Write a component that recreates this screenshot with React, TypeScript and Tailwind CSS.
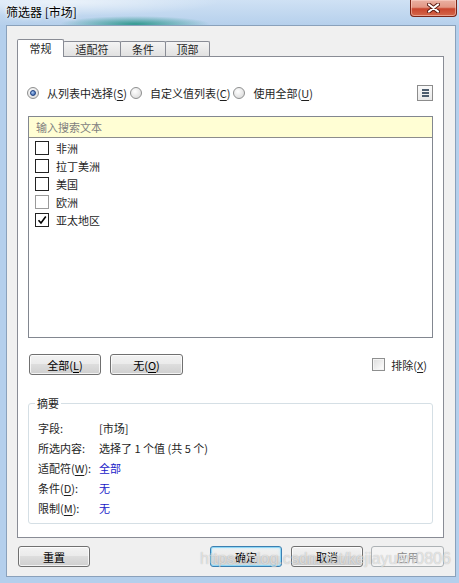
import React from "react";

function U({ children }: { children: React.ReactNode }) {
  return <span className="underline underline-offset-[2px] decoration-[1px]">{children}</span>;
}

function Radio({ checked }: { checked?: boolean }) {
  return (
    <span className="w-[12px] h-[12px] shrink-0 rounded-full border border-[#8e8f8f] bg-[radial-gradient(circle_at_40%_35%,#ffffff,#d4d4d4)] flex items-center justify-center">
      {checked && (
        <span className="w-[6px] h-[6px] rounded-full border border-[#1d3f7f] bg-[radial-gradient(circle_at_35%_35%,#a9c9f0,#2754a6)]" />
      )}
    </span>
  );
}

function Check({ checked, light }: { checked?: boolean; light?: boolean }) {
  return (
    <span
      className={
        "w-[14px] h-[14px] shrink-0 bg-white border flex items-center justify-center " +
        (light ? "border-[#9a9a9a]" : "border-[#222222]")
      }
    >
      {checked && (
        <svg width="10" height="10" viewBox="0 0 10 10">
          <path d="M1.5 5.2 L4 8 L8.8 1.6" fill="none" stroke="#000" strokeWidth="1.6" />
        </svg>
      )}
    </span>
  );
}

type BtnKind = "normal" | "default" | "disabled";

function Btn({ children, w, kind = "normal" }: { children: React.ReactNode; w: string; kind?: BtnKind }) {
  const base = "h-[21px] rounded-[3px] border flex items-center justify-center text-[11px] leading-[14px] shrink-0 ";
  const k =
    kind === "disabled"
      ? "border-[#adb2b5] bg-[#f4f4f4] text-[#8a8a8a]"
      : kind === "default"
      ? "border-[#3c7fb1] bg-[linear-gradient(to_bottom,#f2f2f2_0%,#ebebeb_45%,#dddddd_50%,#cfcfcf_100%)] shadow-[inset_0_0_0_1px_#8fd7f5,inset_0_0_3px_1px_#c5ecfb] text-black"
      : "border-[#707070] bg-[linear-gradient(to_bottom,#f2f2f2_0%,#ebebeb_45%,#dddddd_50%,#cfcfcf_100%)] shadow-[inset_0_0_0_1px_rgba(255,255,255,0.75)] text-black";
  return <div className={base + k + " " + w}>{children}</div>;
}

export default function App() {
  const items: { label: string; checked?: boolean; light?: boolean }[] = [
    { label: "非洲" },
    { label: "拉丁美洲" },
    { label: "美国" },
    { label: "欧洲", light: true },
    { label: "亚太地区", checked: true },
  ];

  return (
    <div className="relative w-[459px] h-[583px] flex flex-col bg-[#b4cfec] font-['Noto_Sans_CJK_SC',sans-serif] text-[11px] leading-[14px] text-[#1e1e1e] overflow-hidden">
      {/* title bar */}
      <div className="h-[25px] shrink-0 flex items-start pl-[6px] pr-[2px] bg-[radial-gradient(ellipse_75px_8px_at_135px_24px,rgba(30,145,130,0.85),transparent),radial-gradient(ellipse_160px_14px_at_60px_2px,rgba(255,255,255,0.6),transparent),linear-gradient(to_bottom,#cfe1f4,#b6d0ec)]">
        <div className="pt-[4px] text-[12px] leading-[16px] text-black [text-shadow:0_0_6px_#ffffff,0_0_3px_#ffffff]">
          筛选器 [市场]
        </div>
        <div className="ml-auto w-[47px] h-[17px] rounded-b-[4px] border border-t-0 border-[#7a2416] bg-[linear-gradient(to_bottom,#eab0a2_0%,#e39784_45%,#c9462e_55%,#d4674a_100%)] shadow-[inset_0_0_0_1px_rgba(255,220,210,0.5)] flex items-center justify-center">
          <svg width="13" height="10" viewBox="0 0 13 10">
            <path d="M2 1.5 L11 8.5 M11 1.5 L2 8.5" stroke="#5a1a10" strokeWidth="4" strokeLinecap="round" />
            <path d="M2 1.5 L11 8.5 M11 1.5 L2 8.5" stroke="#ffffff" strokeWidth="2.2" strokeLinecap="round" />
          </svg>
        </div>
      </div>

      {/* client area */}
      <div className="flex-1 ml-[6px] mr-[3px] mb-[6px] border border-[#8aa1bb] bg-[#f0f0f0] flex flex-col pt-[13px] pl-[10px] pr-[11px]">
        {/* tabs */}
        <div className="flex items-end h-[17px]">
          <div className="relative z-10 -mb-px h-[18px] w-[47px] bg-white border-x border-t border-[#898c95] rounded-t-[2px] flex items-center justify-center pb-[2px]">
            常规
          </div>
          <div className="-ml-px h-[15px] w-[58px] border-x border-t border-[#898c95] rounded-t-[2px] bg-[linear-gradient(to_bottom,#f4f4f4,#e1e1e1)] flex items-center justify-center">
            适配符
          </div>
          <div className="-ml-px h-[15px] w-[46px] border-x border-t border-[#898c95] rounded-t-[2px] bg-[linear-gradient(to_bottom,#f4f4f4,#e1e1e1)] flex items-center justify-center">
            条件
          </div>
          <div className="-ml-px h-[15px] w-[45px] border-x border-t border-[#898c95] rounded-t-[2px] bg-[linear-gradient(to_bottom,#f4f4f4,#e1e1e1)] flex items-center justify-center">
            顶部
          </div>
        </div>

        {/* panel */}
        <div className="h-[482px] shrink-0 border border-[#898c95] bg-white flex flex-col">
          {/* radio row */}
          <div className="mt-[28px] h-[16px] flex items-center pl-[9px] pr-[10px]">
            <Radio checked />
            <span className="ml-[8px]">
              从列表中选择(<U>S</U>)
            </span>
            <span className="ml-[3px]">
              <Radio />
            </span>
            <span className="ml-[8px]">
              自定义值列表(<U>C</U>)
            </span>
            <span className="ml-[3px]">
              <Radio />
            </span>
            <span className="ml-[8px]">
              使用全部(<U>U</U>)
            </span>
            <div className="ml-auto w-[16px] h-[16px] border border-[#8c8c8c] bg-[linear-gradient(to_bottom,#fafafa,#e9e9e9)] flex flex-col items-center justify-center gap-[1px]">
              <span className="w-[7px] h-[2px] bg-[#4d5d6e]" />
              <span className="w-[7px] h-[2px] bg-[#4d5d6e]" />
              <span className="w-[7px] h-[2px] bg-[#4d5d6e]" />
            </div>
          </div>

          {/* list box */}
          <div className="mt-[15px] mx-[10px] h-[222px] shrink-0 border border-[#828790] flex flex-col">
            <div className="h-[21px] shrink-0 border-b border-[#8c8c8c] bg-[#fffed4] flex items-center pl-[7px] text-[#7f7f7f]">
              输入搜索文本
            </div>
            <div className="pt-px flex flex-col">
              {items.map((it) => (
                <div key={it.label} className="h-[18px] flex items-center pl-[6px]">
                  <Check checked={it.checked} light={it.light} />
                  <span className="ml-[7px]">{it.label}</span>
                </div>
              ))}
            </div>
          </div>

          {/* all / none / exclude */}
          <div className="mt-[16px] flex items-center pl-[11px] pr-[16px]">
            <Btn w="w-[72px]">
              全部(<U>L</U>)
            </Btn>
            <div className="ml-[9px]">
              <Btn w="w-[73px]">
                无(<U>O</U>)
              </Btn>
            </div>
            <div className="ml-auto flex items-center">
              <span className="w-[13px] h-[13px] border border-[#8e8f8f] bg-[linear-gradient(135deg,#dcdcdc,#ffffff)] shadow-[inset_0_0_0_1px_#f4f4f4]" />
              <span className="ml-[6px]">
                排除(<U>X</U>)
              </span>
            </div>
          </div>

          {/* summary */}
          <div className="relative mt-[28px] mx-[10px] h-[121px] shrink-0 border border-[#d5dfe5] rounded-[3px] pt-[14px] pl-[9px]">
            <div className="absolute -top-[8px] left-[6px] px-[2px] bg-white">摘要</div>
            <div className="grid grid-cols-[61px_1fr]">
              <div className="h-[20px] flex items-center">字段:</div>
              <div className="h-[20px] flex items-center">[市场]</div>
              <div className="h-[20px] flex items-center">所选内容:</div>
              <div className="h-[20px] flex items-center">选择了 1 个值 (共 5 个)</div>
              <div className="h-[20px] flex items-center">
                适配符(<U>W</U>):
              </div>
              <div className="h-[20px] flex items-center text-[#1a1ac8]">全部</div>
              <div className="h-[20px] flex items-center">
                条件(<U>D</U>):
              </div>
              <div className="h-[20px] flex items-center text-[#1a1ac8]">无</div>
              <div className="h-[20px] flex items-center">
                限制(<U>M</U>):
              </div>
              <div className="h-[20px] flex items-center text-[#1a1ac8]">无</div>
            </div>
          </div>
        </div>

        {/* dialog buttons */}
        <div className="mt-[8px] flex items-center pl-[1px]">
          <Btn w="w-[72px]">重置</Btn>
          <div className="ml-auto flex items-center">
            <Btn w="w-[72px]" kind="default">
              确定
            </Btn>
            <div className="ml-[9px]">
              <Btn w="w-[72px]">取消</Btn>
            </div>
            <div className="ml-[8px]">
              <Btn w="w-[73px]" kind="disabled">
                应用
              </Btn>
            </div>
          </div>
        </div>
      </div>

      {/* watermark */}
      <div className="absolute left-[200px] top-[548px] text-[16px] leading-[22px] font-['Liberation_Sans',sans-serif] text-white/60 [text-shadow:0_0_1px_rgba(0,0,0,0.3)] pointer-events-none whitespace-nowrap">
        https://blog.csdn.net/kejiayuan0806
      </div>
    </div>
  );
}
